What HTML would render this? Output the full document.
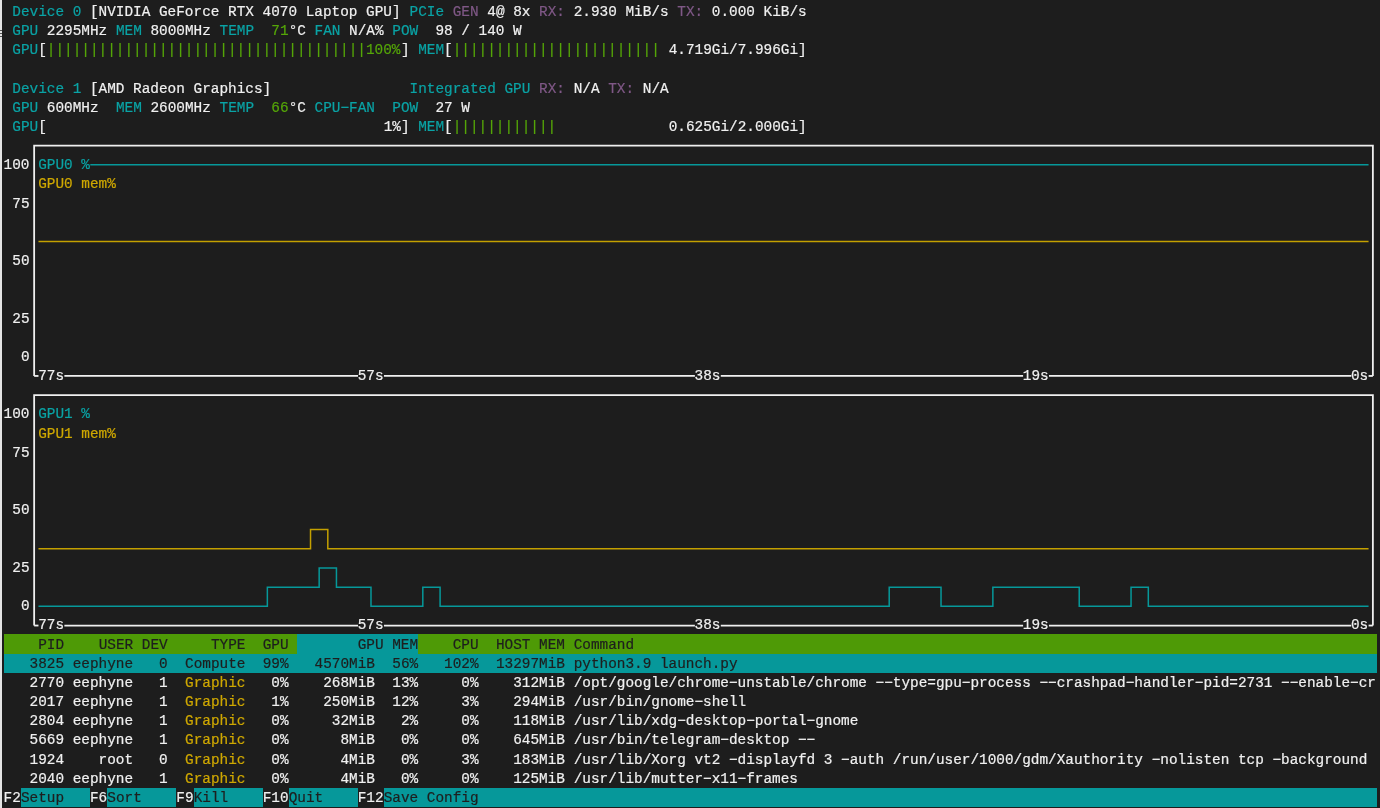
<!DOCTYPE html><html><head><meta charset="utf-8"><style>
html,body{margin:0;padding:0;}
body{width:1380px;height:808px;overflow:hidden;background:#1d1d1d;position:relative;font-family:"Liberation Mono",monospace;font-size:14.393px;}
.r{position:absolute;left:0;width:1380px;height:19.2px;line-height:19.2px;white-space:pre;will-change:transform;}
.t{position:absolute;top:0;-webkit-text-stroke:0.2px currentColor;}
.b{position:absolute;}
svg{position:absolute;left:0;top:0;}

</style></head><body>
<div class="b" style="left:0;top:0;width:2px;height:808px;background:#e4e4e4"></div>
<div class="b" style="left:0;top:30px;width:2px;height:1px;background:#555"></div>
<div class="b" style="left:0;top:33px;width:2px;height:1px;background:#555"></div>
<div class="b" style="left:0;top:36px;width:2px;height:1px;background:#555"></div>
<div class="b" style="left:3.62px;top:634.40px;width:293.66px;height:19.2px;background:#4e9a06"></div>
<div class="b" style="left:297.28px;top:634.40px;width:120.92px;height:19.2px;background:#06989a"></div>
<div class="b" style="left:418.20px;top:634.40px;width:958.71px;height:19.2px;background:#4e9a06"></div>
<div class="b" style="left:3.62px;top:653.60px;width:1373.28px;height:19.2px;background:#06989a"></div>
<div class="b" style="left:20.89px;top:788.00px;width:69.10px;height:19.2px;background:#06989a"></div>
<div class="b" style="left:107.26px;top:788.00px;width:69.10px;height:19.2px;background:#06989a"></div>
<div class="b" style="left:193.63px;top:788.00px;width:69.10px;height:19.2px;background:#06989a"></div>
<div class="b" style="left:288.64px;top:788.00px;width:69.10px;height:19.2px;background:#06989a"></div>
<div class="b" style="left:383.65px;top:788.00px;width:993.26px;height:19.2px;background:#06989a"></div>
<svg width="1380" height="808"><g transform="translate(0.3,0.75)"><path d="M33.85,375.20 V144.80 H1372.58 V375.20" fill="none" stroke="#f0f0f0" stroke-width="1.8"/><line x1="33.85" y1="375.20" x2="38.17" y2="375.20" stroke="#f0f0f0" stroke-width="1.8"/><line x1="64.08" y1="375.20" x2="357.74" y2="375.20" stroke="#f0f0f0" stroke-width="1.8"/><line x1="383.65" y1="375.20" x2="694.58" y2="375.20" stroke="#f0f0f0" stroke-width="1.8"/><line x1="720.49" y1="375.20" x2="1022.79" y2="375.20" stroke="#f0f0f0" stroke-width="1.8"/><line x1="1048.70" y1="375.20" x2="1350.99" y2="375.20" stroke="#f0f0f0" stroke-width="1.8"/><line x1="1368.27" y1="375.20" x2="1372.58" y2="375.20" stroke="#f0f0f0" stroke-width="1.8"/><path d="M33.85,624.80 V394.40 H1372.58 V624.80" fill="none" stroke="#f0f0f0" stroke-width="1.8"/><line x1="33.85" y1="624.80" x2="38.17" y2="624.80" stroke="#f0f0f0" stroke-width="1.8"/><line x1="64.08" y1="624.80" x2="357.74" y2="624.80" stroke="#f0f0f0" stroke-width="1.8"/><line x1="383.65" y1="624.80" x2="694.58" y2="624.80" stroke="#f0f0f0" stroke-width="1.8"/><line x1="720.49" y1="624.80" x2="1022.79" y2="624.80" stroke="#f0f0f0" stroke-width="1.8"/><line x1="1048.70" y1="624.80" x2="1350.99" y2="624.80" stroke="#f0f0f0" stroke-width="1.8"/><line x1="1368.27" y1="624.80" x2="1372.58" y2="624.80" stroke="#f0f0f0" stroke-width="1.8"/><line x1="89.99" y1="164.00" x2="1368.27" y2="164.00" stroke="#06989a" stroke-width="1.5"/><line x1="38.17" y1="240.80" x2="1368.27" y2="240.80" stroke="#c4a000" stroke-width="1.5"/><path d="M38.17,548.00 H310.23 V528.80 H327.51 V548.00 H1368.27" fill="none" stroke="#c4a000" stroke-width="1.5"/><path d="M38.17,605.60 H267.05 V586.40 H318.87 V567.20 H336.14 V586.40 H370.69 V605.60 H422.51 V586.40 H439.79 V605.60 H888.91 V586.40 H940.73 V605.60 H992.56 V586.40 H1078.93 V605.60 H1130.75 V586.40 H1148.02 V605.60 H1368.27" fill="none" stroke="#06989a" stroke-width="1.5"/></g></svg>
<div class="r" style="top:2.87px"><span class="t" style="left:12.26px;color:#0aa3a5">Device 0</span><span class="t" style="left:89.99px;color:#f0f0f0">[NVIDIA GeForce RTX 4070 Laptop GPU]</span><span class="t" style="left:409.56px;color:#0aa3a5">PCIe</span><span class="t" style="left:452.74px;color:#7f5886">GEN</span><span class="t" style="left:487.29px;color:#f0f0f0">4@ 8x</span><span class="t" style="left:539.11px;color:#7f5886">RX:</span><span class="t" style="left:573.66px;color:#f0f0f0">2.930 MiB/s</span><span class="t" style="left:677.31px;color:#7f5886">TX:</span><span class="t" style="left:711.85px;color:#f0f0f0">0.000 KiB/s</span></div>
<div class="r" style="top:22.04px"><span class="t" style="left:12.26px;color:#0aa3a5">GPU</span><span class="t" style="left:46.80px;color:#f0f0f0">2295MHz</span><span class="t" style="left:115.90px;color:#0aa3a5">MEM</span><span class="t" style="left:150.45px;color:#f0f0f0">8000MHz</span><span class="t" style="left:219.55px;color:#0aa3a5">TEMP</span><span class="t" style="left:271.37px;color:#55a608">71</span><span class="t" style="left:288.64px;color:#f0f0f0">°C</span><span class="t" style="left:314.55px;color:#0aa3a5">FAN</span><span class="t" style="left:349.10px;color:#f0f0f0">N/A%</span><span class="t" style="left:392.29px;color:#0aa3a5">POW</span><span class="t" style="left:435.47px;color:#f0f0f0">98 / 140 W</span></div>
<div class="r" style="top:41.21px"><span class="t" style="left:12.26px;color:#0aa3a5">GPU</span><span class="t" style="left:38.17px;color:#f0f0f0">[</span><span class="t" style="left:46.80px;color:#55a608">|||||||||||||||||||||||||||||||||||||100%</span><span class="t" style="left:400.92px;color:#f0f0f0">]</span><span class="t" style="left:418.20px;color:#0aa3a5">MEM</span><span class="t" style="left:444.11px;color:#f0f0f0">[</span><span class="t" style="left:452.74px;color:#55a608">||||||||||||||||||||||||</span><span class="t" style="left:668.67px;color:#f0f0f0">4.719Gi/7.996Gi]</span></div>
<div class="r" style="top:79.55px"><span class="t" style="left:12.26px;color:#0aa3a5">Device 1</span><span class="t" style="left:89.99px;color:#f0f0f0">[AMD Radeon Graphics]</span><span class="t" style="left:409.56px;color:#0aa3a5">Integrated GPU</span><span class="t" style="left:539.11px;color:#7f5886">RX:</span><span class="t" style="left:573.66px;color:#f0f0f0">N/A</span><span class="t" style="left:608.21px;color:#7f5886">TX:</span><span class="t" style="left:642.76px;color:#f0f0f0">N/A</span></div>
<div class="r" style="top:98.72px"><span class="t" style="left:12.26px;color:#0aa3a5">GPU</span><span class="t" style="left:46.80px;color:#f0f0f0">600MHz</span><span class="t" style="left:115.90px;color:#0aa3a5">MEM</span><span class="t" style="left:150.45px;color:#f0f0f0">2600MHz</span><span class="t" style="left:219.55px;color:#0aa3a5">TEMP</span><span class="t" style="left:271.37px;color:#55a608">66</span><span class="t" style="left:288.64px;color:#f0f0f0">°C</span><span class="t" style="left:314.55px;color:#0aa3a5">CPU−FAN</span><span class="t" style="left:392.29px;color:#0aa3a5">POW</span><span class="t" style="left:435.47px;color:#f0f0f0">27 W</span></div>
<div class="r" style="top:117.90px"><span class="t" style="left:12.26px;color:#0aa3a5">GPU</span><span class="t" style="left:38.17px;color:#f0f0f0">[</span><span class="t" style="left:383.65px;color:#f0f0f0">1%]</span><span class="t" style="left:418.20px;color:#0aa3a5">MEM</span><span class="t" style="left:444.11px;color:#f0f0f0">[</span><span class="t" style="left:452.74px;color:#55a608">||||||||||||</span><span class="t" style="left:668.67px;color:#f0f0f0">0.625Gi/2.000Gi]</span></div>
<div class="r" style="top:156.24px"><span class="t" style="left:3.62px;color:#f0f0f0">100</span><span class="t" style="left:38.17px;color:#0aa3a5">GPU0 %</span></div>
<div class="r" style="top:175.41px"><span class="t" style="left:38.17px;color:#cfa800">GPU0 mem%</span></div>
<div class="r" style="top:194.58px"><span class="t" style="left:12.26px;color:#f0f0f0">75</span></div>
<div class="r" style="top:252.09px"><span class="t" style="left:12.26px;color:#f0f0f0">50</span></div>
<div class="r" style="top:309.61px"><span class="t" style="left:12.26px;color:#f0f0f0">25</span></div>
<div class="r" style="top:347.95px"><span class="t" style="left:20.89px;color:#f0f0f0">0</span></div>
<div class="r" style="top:367.12px"><span class="t" style="left:38.17px;color:#f0f0f0">77s</span><span class="t" style="left:357.74px;color:#f0f0f0">57s</span><span class="t" style="left:694.58px;color:#f0f0f0">38s</span><span class="t" style="left:1022.79px;color:#f0f0f0">19s</span><span class="t" style="left:1350.99px;color:#f0f0f0">0s</span></div>
<div class="r" style="top:405.46px"><span class="t" style="left:3.62px;color:#f0f0f0">100</span><span class="t" style="left:38.17px;color:#0aa3a5">GPU1 %</span></div>
<div class="r" style="top:424.63px"><span class="t" style="left:38.17px;color:#cfa800">GPU1 mem%</span></div>
<div class="r" style="top:443.80px"><span class="t" style="left:12.26px;color:#f0f0f0">75</span></div>
<div class="r" style="top:501.32px"><span class="t" style="left:12.26px;color:#f0f0f0">50</span></div>
<div class="r" style="top:558.83px"><span class="t" style="left:12.26px;color:#f0f0f0">25</span></div>
<div class="r" style="top:597.17px"><span class="t" style="left:20.89px;color:#f0f0f0">0</span></div>
<div class="r" style="top:616.34px"><span class="t" style="left:38.17px;color:#f0f0f0">77s</span><span class="t" style="left:357.74px;color:#f0f0f0">57s</span><span class="t" style="left:694.58px;color:#f0f0f0">38s</span><span class="t" style="left:1022.79px;color:#f0f0f0">19s</span><span class="t" style="left:1350.99px;color:#f0f0f0">0s</span></div>
<div class="r" style="top:635.51px"><span class="t" style="left:38.17px;color:#1e1e1e">PID</span><span class="t" style="left:98.63px;color:#1e1e1e">USER</span><span class="t" style="left:141.81px;color:#1e1e1e">DEV</span><span class="t" style="left:210.91px;color:#1e1e1e">TYPE</span><span class="t" style="left:262.73px;color:#1e1e1e">GPU</span><span class="t" style="left:357.74px;color:#1e1e1e">GPU MEM</span><span class="t" style="left:452.74px;color:#1e1e1e">CPU</span><span class="t" style="left:495.93px;color:#1e1e1e">HOST MEM</span><span class="t" style="left:573.66px;color:#1e1e1e">Command</span></div>
<div class="r" style="top:654.68px"><span class="t" style="left:29.53px;color:#1e1e1e">3825</span><span class="t" style="left:72.72px;color:#1e1e1e">eephyne</span><span class="t" style="left:159.09px;color:#1e1e1e">0</span><span class="t" style="left:185.00px;color:#1e1e1e">Compute</span><span class="t" style="left:262.73px;color:#1e1e1e">99%</span><span class="t" style="left:314.55px;color:#1e1e1e">4570MiB</span><span class="t" style="left:392.29px;color:#1e1e1e">56%</span><span class="t" style="left:444.11px;color:#1e1e1e">102%</span><span class="t" style="left:495.93px;color:#1e1e1e">13297MiB</span><span class="t" style="left:573.66px;color:#1e1e1e">python3.9 launch.py</span></div>
<div class="r" style="top:673.86px"><span class="t" style="left:29.53px;color:#f0f0f0">2770</span><span class="t" style="left:72.72px;color:#f0f0f0">eephyne</span><span class="t" style="left:159.09px;color:#f0f0f0">1</span><span class="t" style="left:185.00px;color:#cfa800">Graphic</span><span class="t" style="left:262.73px;color:#f0f0f0"> 0%</span><span class="t" style="left:314.55px;color:#f0f0f0"> 268MiB</span><span class="t" style="left:392.29px;color:#f0f0f0">13%</span><span class="t" style="left:444.11px;color:#f0f0f0">  0%</span><span class="t" style="left:495.93px;color:#f0f0f0">  312MiB</span><span class="t" style="left:573.66px;color:#f0f0f0">/opt/google/chrome−unstable/chrome −−type=gpu−process −−crashpad−handler−pid=2731 −−enable−cr</span></div>
<div class="r" style="top:693.03px"><span class="t" style="left:29.53px;color:#f0f0f0">2017</span><span class="t" style="left:72.72px;color:#f0f0f0">eephyne</span><span class="t" style="left:159.09px;color:#f0f0f0">1</span><span class="t" style="left:185.00px;color:#cfa800">Graphic</span><span class="t" style="left:262.73px;color:#f0f0f0"> 1%</span><span class="t" style="left:314.55px;color:#f0f0f0"> 250MiB</span><span class="t" style="left:392.29px;color:#f0f0f0">12%</span><span class="t" style="left:444.11px;color:#f0f0f0">  3%</span><span class="t" style="left:495.93px;color:#f0f0f0">  294MiB</span><span class="t" style="left:573.66px;color:#f0f0f0">/usr/bin/gnome−shell</span></div>
<div class="r" style="top:712.20px"><span class="t" style="left:29.53px;color:#f0f0f0">2804</span><span class="t" style="left:72.72px;color:#f0f0f0">eephyne</span><span class="t" style="left:159.09px;color:#f0f0f0">1</span><span class="t" style="left:185.00px;color:#cfa800">Graphic</span><span class="t" style="left:262.73px;color:#f0f0f0"> 0%</span><span class="t" style="left:314.55px;color:#f0f0f0">  32MiB</span><span class="t" style="left:392.29px;color:#f0f0f0"> 2%</span><span class="t" style="left:444.11px;color:#f0f0f0">  0%</span><span class="t" style="left:495.93px;color:#f0f0f0">  118MiB</span><span class="t" style="left:573.66px;color:#f0f0f0">/usr/lib/xdg−desktop−portal−gnome</span></div>
<div class="r" style="top:731.37px"><span class="t" style="left:29.53px;color:#f0f0f0">5669</span><span class="t" style="left:72.72px;color:#f0f0f0">eephyne</span><span class="t" style="left:159.09px;color:#f0f0f0">1</span><span class="t" style="left:185.00px;color:#cfa800">Graphic</span><span class="t" style="left:262.73px;color:#f0f0f0"> 0%</span><span class="t" style="left:314.55px;color:#f0f0f0">   8MiB</span><span class="t" style="left:392.29px;color:#f0f0f0"> 0%</span><span class="t" style="left:444.11px;color:#f0f0f0">  0%</span><span class="t" style="left:495.93px;color:#f0f0f0">  645MiB</span><span class="t" style="left:573.66px;color:#f0f0f0">/usr/bin/telegram−desktop −−</span></div>
<div class="r" style="top:750.54px"><span class="t" style="left:29.53px;color:#f0f0f0">1924</span><span class="t" style="left:72.72px;color:#f0f0f0">   root</span><span class="t" style="left:159.09px;color:#f0f0f0">0</span><span class="t" style="left:185.00px;color:#cfa800">Graphic</span><span class="t" style="left:262.73px;color:#f0f0f0"> 0%</span><span class="t" style="left:314.55px;color:#f0f0f0">   4MiB</span><span class="t" style="left:392.29px;color:#f0f0f0"> 0%</span><span class="t" style="left:444.11px;color:#f0f0f0">  3%</span><span class="t" style="left:495.93px;color:#f0f0f0">  183MiB</span><span class="t" style="left:573.66px;color:#f0f0f0">/usr/lib/Xorg vt2 −displayfd 3 −auth /run/user/1000/gdm/Xauthority −nolisten tcp −background</span></div>
<div class="r" style="top:769.71px"><span class="t" style="left:29.53px;color:#f0f0f0">2040</span><span class="t" style="left:72.72px;color:#f0f0f0">eephyne</span><span class="t" style="left:159.09px;color:#f0f0f0">1</span><span class="t" style="left:185.00px;color:#cfa800">Graphic</span><span class="t" style="left:262.73px;color:#f0f0f0"> 0%</span><span class="t" style="left:314.55px;color:#f0f0f0">   4MiB</span><span class="t" style="left:392.29px;color:#f0f0f0"> 0%</span><span class="t" style="left:444.11px;color:#f0f0f0">  0%</span><span class="t" style="left:495.93px;color:#f0f0f0">  125MiB</span><span class="t" style="left:573.66px;color:#f0f0f0">/usr/lib/mutter−x11−frames</span></div>
<div class="r" style="top:788.88px"><span class="t" style="left:3.62px;color:#f0f0f0">F2</span><span class="t" style="left:20.89px;color:#1e1e1e">Setup</span><span class="t" style="left:89.99px;color:#f0f0f0">F6</span><span class="t" style="left:107.26px;color:#1e1e1e">Sort</span><span class="t" style="left:176.36px;color:#f0f0f0">F9</span><span class="t" style="left:193.63px;color:#1e1e1e">Kill</span><span class="t" style="left:262.73px;color:#f0f0f0">F10</span><span class="t" style="left:288.64px;color:#1e1e1e">Quit</span><span class="t" style="left:357.74px;color:#f0f0f0">F12</span><span class="t" style="left:383.65px;color:#1e1e1e">Save Config</span></div>
</body></html>
